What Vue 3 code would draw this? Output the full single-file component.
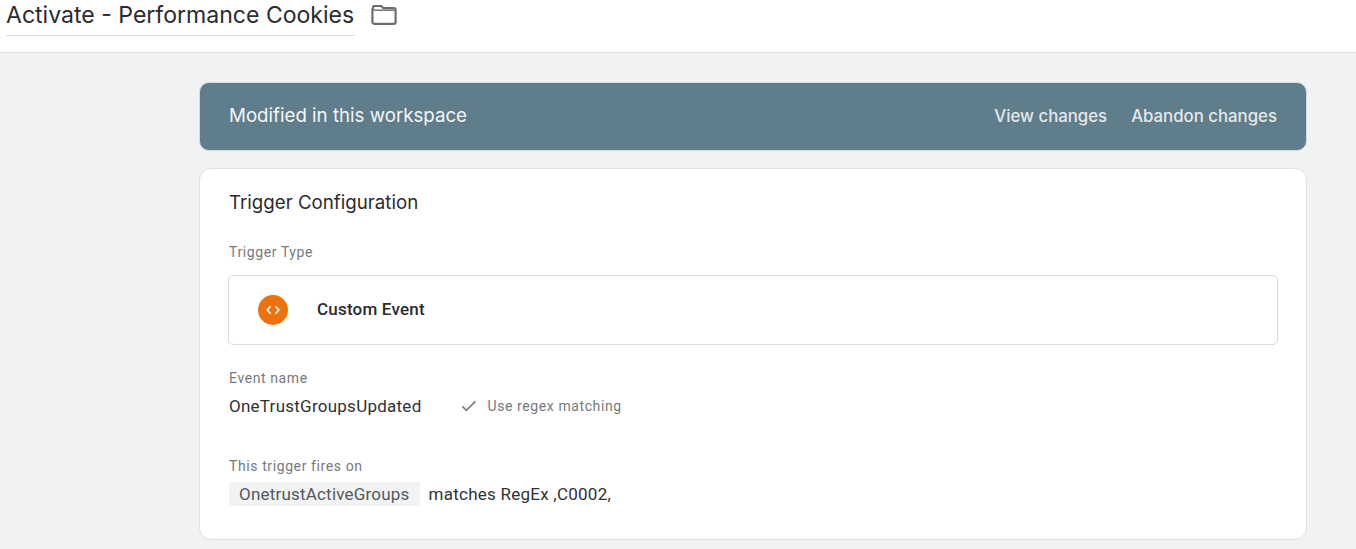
<script setup>
const title = 'Activate - Performance Cookies'
</script>

<template>
  <div class="page">
    <header class="top">
      <h1 class="title">{{ title }}</h1>
      <svg class="folder" width="26" height="20" viewBox="0 0 26 20" fill="none">
        <path d="M2.2 3.2V1.9C2.2 1.4 2.6 1 3.1 1H10.2L12.4 3.2H22.9C23.9 3.2 24.6 3.9 24.6 4.9V17.1C24.6 18.1 23.9 18.8 22.9 18.8H3.1C2.1 18.8 1.4 18.1 1.4 17.1V4.9C1.4 3.9 2.1 3.2 3.1 3.2Z" stroke="#6b6d70" stroke-width="2.2"/>
        <path d="M2.4 5.2H23.6" stroke="#6b6d70" stroke-width="1.4"/>
      </svg>
    </header>
    <main class="main">
      <section class="banner">
        <span class="banner-title">Modified in this workspace</span>
        <div class="banner-actions">
          <span>View changes</span>
          <span>Abandon changes</span>
        </div>
      </section>
      <section class="card">
        <h2 class="card-title">Trigger Configuration</h2>
        <div class="label type-label">Trigger Type</div>
        <div class="type-box">
          <span class="type-icon">
            <svg width="14" height="10" viewBox="0 0 14 10" fill="none">
              <path d="M4.6 1.2 1.2 5l3.4 3.8M9.4 1.2 12.8 5 9.4 8.8" stroke="#fff" stroke-width="1.6"/>
            </svg>
          </span>
          <span class="type-name">Custom Event</span>
        </div>
        <div class="label event-label">Event name</div>
        <div class="event-row">
          <span class="value">OneTrustGroupsUpdated</span>
          <span class="regex">
            <svg width="16" height="12" viewBox="0 0 16 12" fill="none">
              <path d="M1.4 6.4 5.4 10.4 14.4 1.4" stroke="#77797d" stroke-width="1.5"/>
            </svg>
            <span>Use regex matching</span>
          </span>
        </div>
        <div class="label fires-label">This trigger fires on</div>
        <div class="fires-row">
          <span class="chip">OnetrustActiveGroups</span>
          <span class="value">matches RegEx ,C0002,</span>
        </div>
      </section>
    </main>
  </div>
</template>

<style scoped>
.page {
  height: 549px;
  overflow: hidden;
  background: #f1f2f4;
  font-family: Roboto, "Liberation Sans", sans-serif;
  color: #202124;
}
.top {
  height: 53px;
  box-sizing: border-box;
  background: #fff;
  border-bottom: 1px solid #e0e1e3;
  display: flex;
  align-items: flex-start;
  padding-left: 6px;
}
.title {
  margin: 0;
  width: 349px;
  height: 36px;
  box-sizing: border-box;
  border-bottom: 1px solid #dadce0;
  font-family: Inter, Roboto, sans-serif;
  font-weight: 400;
  font-size: 23.06px;
  line-height: 31px;
  white-space: nowrap;
  color: #2b2c2f;
}
.folder {
  margin: 5px 0 0 16px;
}
.main {
  padding: 29px 49px 0 199px;
}
.banner {
  height: 69px;
  box-sizing: border-box;
  background: #607d8b;
  border: 1px solid #d5dadd;
  border-radius: 10px;
  display: flex;
  align-items: center;
  justify-content: space-between;
  padding: 0 29px;
  color: #fff;
}
.banner-title {
  font-family: Inter, Roboto, sans-serif;
  font-size: 18.7px;
  line-height: 24px;
  margin-top: -1px;
  color: #f4f6f7;
}
.banner-actions {
  display: flex;
  gap: 24px;
  margin-top: -1px;
  font-family: Inter, Roboto, sans-serif;
  font-size: 16.8px;
  font-weight: 500;
  color: #e4e8ea;
}
.card {
  margin-top: 17px;
  height: 372px;
  box-sizing: border-box;
  background: #fff;
  border: 1px solid #dfe1e4;
  border-radius: 12px;
  padding: 21px 28px 0 29px;
}
.card-title {
  margin: 0;
  font-family: Inter, Roboto, sans-serif;
  font-size: 18.7px;
  line-height: 26px;
  font-weight: 400;
  color: #2a2b2e;
}
.label {
  font-size: 14px;
  line-height: 18px;
  color: #77797d;
  letter-spacing: 0.6px;
}
.type-label {
  margin-top: 27px;
}
.type-box {
  margin-top: 14px;
  margin-left: -1px;
  height: 70px;
  box-sizing: border-box;
  border: 1px solid #d9dbde;
  border-radius: 5px;
  display: flex;
  align-items: center;
  padding-left: 29px;
}
.type-icon {
  width: 30px;
  height: 30px;
  border-radius: 50%;
  background: #ec7210;
  display: flex;
  align-items: center;
  justify-content: center;
}
.type-name {
  margin-left: 29px;
  margin-top: -2px;
  font-size: 17px;
  letter-spacing: 0.2px;
  font-weight: 500;
  color: #2a2b2e;
}
.event-label {
  margin-top: 24px;
}
.event-row {
  margin-top: 7px;
  display: flex;
  align-items: center;
  height: 24px;
}
.value {
  font-size: 17px;
  letter-spacing: 0.25px;
  color: #303134;
}
.regex {
  margin-left: 40px;
  display: flex;
  align-items: center;
  gap: 10px;
  font-size: 14px;
  letter-spacing: 0.6px;
  color: #77797d;
}
.fires-label {
  margin-top: 39px;
}
.fires-row {
  margin-top: 7px;
  display: flex;
  align-items: center;
}
.chip {
  background: #f1f3f4;
  border-radius: 3px;
  padding: 0 10px;
  height: 24px;
  line-height: 24px;
  font-size: 17px;
  letter-spacing: 0.2px;
  color: #55585c;
  margin-right: 9px;
}
</style>

<style>
html, body { margin: 0; background: #f1f2f4; }
</style>
